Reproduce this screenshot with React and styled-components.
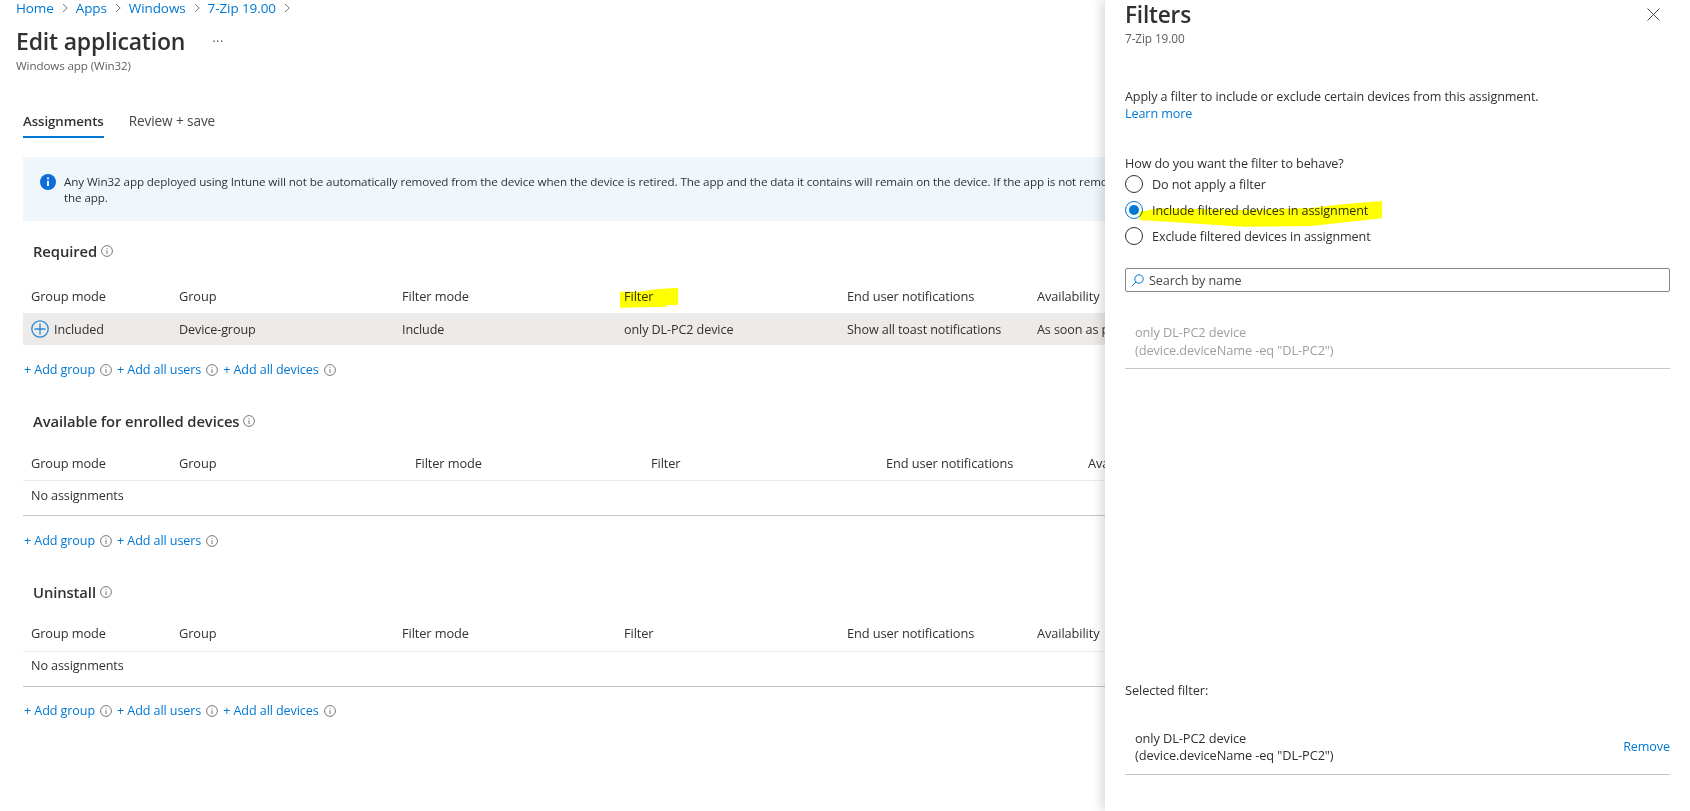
import React from 'react'
import styled, { createGlobalStyle } from 'styled-components'

const GlobalStyle = createGlobalStyle`
html, body {
  margin: 0;
  padding: 0;
  background: #ffffff;
}
body {
  font-family: "Open Sans", "Liberation Sans", sans-serif;
  font-size: 12.6px;
  color: #323130;
  letter-spacing: -0.1px;
}
`

const Page = styled.div`
position: relative;
width: 1690px;
height: 811px;
overflow: hidden;
`

const Main = styled.div`
width: 1667px;
padding-left: 23px;
`

const Breadcrumb = styled.nav`
display: flex;
align-items: center;
height: 16px;
margin-left: -7px;
gap: 6px;
`

const Crumb = styled.a`
color: #0078d4;
font-size: 13.5px;
line-height: 16px;
`

const Chevron = styled.svg`
width: 10px;
height: 10px;
fill: none;
stroke: #7a7876;
stroke-width: 1;
`

const TitleRow = styled.div`
display: flex;
align-items: center;
margin: 9px 0 1px -7px;
height: 32px;
`

const Title = styled.h1`
margin: 0;
font-size: 23px;
font-weight: 600;
line-height: 32px;
letter-spacing: -0.2px;
color: #323130;
`

const More = styled.span`
margin: 0 0 0 27px;
font-size: 13px;
letter-spacing: 0.5px;
color: #605e5c;
`

const Subtitle = styled.div`
margin-left: -7px;
font-size: 11.6px;
line-height: 16px;
color: #605e5c;
`

const Tabs = styled.div`
display: flex;
gap: 25px;
margin-top: 31px;
height: 33px;
`

const Tab = styled.div`
font-size: ${p => (p.$active ? '13.3px' : '13.6px')};
line-height: 16px;
padding-top: 8px;
height: 23px;
font-weight: ${p => (p.$active ? 600 : 400)};
border-bottom: ${p => (p.$active ? '2px solid #0078d4' : 'none')};
color: ${p => (p.$active ? '#323130' : '#484644')};
`

const Banner = styled.div`
display: flex;
gap: 8px;
margin-top: 19px;
height: 47px;
padding: 17px 0 0 17px;
background: #eff6fc;
`

const BannerText = styled.div`
width: 1041px;
overflow: hidden;
font-size: 11.65px;
line-height: 15.5px;
white-space: nowrap;
color: #323130;
`

const Section = styled.section`
margin-top: ${p => p.$top}px;
`

const Heading = styled.h2`
display: flex;
align-items: center;
gap: 4px;
margin: 0 0 ${p => p.$gap}px 10px;
font-size: 14.8px;
line-height: 20px;
font-weight: 600;
color: #323130;
`

const HeaderRow = styled.div`
display: grid;
grid-template-columns: ${p => p.$cols};
align-items: center;
height: 35px;
padding-left: 8px;
font-size: 12.8px;
font-weight: 500;
border-bottom: ${p => (p.$line ? '1px solid #edebe9' : 'none')};
`

const DataRow = styled.div`
display: grid;
grid-template-columns: ${p => p.$cols};
align-items: center;
height: 32px;
padding-left: 8px;
font-size: 12.6px;
background: #edebe9;
color: #323130;
`

const EmptyRow = styled.div`
display: flex;
align-items: center;
height: 35px;
padding: 0 0 6px 8px;
font-size: 12.6px;
box-sizing: border-box;
border-bottom: 1px solid #c8c6c4;
`

const Cell = styled.div`
position: relative;
white-space: nowrap;
`

const ClipCell = styled(Cell)`
overflow: hidden;
`

const ModeCell = styled(Cell)`
display: flex;
align-items: center;
gap: 5px;
`

const Highlight = styled.svg`
position: absolute;
left: ${p => p.$left}px;
top: ${p => p.$top}px;
mix-blend-mode: multiply;
pointer-events: none;
`

const Links = styled.div`
display: flex;
align-items: center;
gap: 5px;
margin-top: ${p => p.$top}px;
height: 16px;
padding-left: 1px;
`

const LinkItem = styled.span`
display: inline-flex;
align-items: center;
gap: 5px;
`

const Link = styled.a`
font-size: 12.6px;
line-height: 16px;
color: #0078d4;
`

const InfoSvg = styled.svg`
flex: none;
width: 12px;
height: 12px;
fill: none;
stroke: #797775;
stroke-width: 1;
`

const Panel = styled.aside`
position: absolute;
top: 0;
right: 0;
bottom: 0;
display: flex;
flex-direction: column;
box-sizing: border-box;
width: 585px;
padding: 0 20px 36px;
background: #ffffff;
box-shadow: -4px 0 10px rgba(0, 0, 0, 0.14);
`

const PanelHead = styled.div`
display: flex;
justify-content: space-between;
height: 30px;
`

const PanelTitle = styled.h2`
margin: 0;
font-size: 22.6px;
line-height: 30px;
font-weight: 600;
letter-spacing: -0.2px;
color: #323130;
`

const CloseIcon = styled.svg`
width: 13px;
height: 13px;
margin: 8px 10px 0 0;
stroke: #484644;
stroke-width: 1;
fill: none;
`

const PanelSub = styled.div`
font-size: 11.8px;
line-height: 16px;
color: #605e5c;
`

const PanelText = styled.div`
margin-top: ${p => p.$top}px;
font-size: 12.6px;
line-height: 17.5px;
color: #323130;
`

const PanelLink = styled.a`
display: block;
font-size: 12.6px;
line-height: 17.5px;
color: #0078d4;
`

const RadioGroup = styled.div`
display: flex;
flex-direction: column;
gap: 4px;
margin-top: 1px;
`

const RadioRow = styled.label`
position: relative;
display: flex;
align-items: center;
gap: 9px;
height: 22px;
font-size: 12.6px;
`

const RadioDot = styled.span`
display: flex;
align-items: center;
justify-content: center;
box-sizing: border-box;
width: 18px;
height: 18px;
border-radius: 50%;
border: 1px solid ${p => (p.$checked ? '#0078d4' : '#323130')};
&::after {
  content: '';
  display: ${p => (p.$checked ? 'block' : 'none')};
  width: 10px;
  height: 10px;
  border-radius: 50%;
  background: #0078d4;
}
`

const SearchBox = styled.div`
display: flex;
align-items: center;
gap: 5px;
box-sizing: border-box;
height: 24px;
margin-top: 21px;
padding-left: 5px;
border: 1px solid #8a8886;
border-radius: 2px;
font-size: 12.6px;
color: #484644;
`

const SearchIcon = styled.svg`
width: 13px;
height: 13px;
fill: none;
stroke: #0078d4;
stroke-width: 1;
`

const FilterItem = styled.div`
display: flex;
align-items: center;
justify-content: space-between;
padding: ${p => p.$pad};
border-bottom: 1px solid #c8c6c4;
font-size: 12.8px;
line-height: 17.6px;
color: ${p => (p.$muted ? '#a19f9d' : '#323130')};
`

const Bottom = styled.div`
margin-top: auto;
`

const SelectedLabel = styled.div`
font-size: 12.8px;
font-weight: 500;
line-height: 17.5px;
margin-bottom: 30px;
`

const Info = () => (
  <InfoSvg viewBox="0 0 12 12">
    <circle cx="6" cy="6" r="5.4" />
    <path d="M6 5.2V9M6 3.2v1" />
  </InfoSvg>
)

const BreadSep = () => (
  <Chevron viewBox="0 0 10 10">
    <path d="M3 1l4.2 4L3 9" />
  </Chevron>
)

// last column stops where the panel starts
const narrow = '148px 223px 222px 223px 190px 68px'
const wide = '148px 236px 236px 235px 202px 17px'
const heads = ['Group mode', 'Group', 'Filter mode', 'Filter', 'End user notifications']

const LinkRow = ({ top, devices }) => (
  <Links $top={top}>
    <LinkItem><Link>+ Add group</Link><Info /></LinkItem>
    <LinkItem><Link>+ Add all users</Link><Info /></LinkItem>
    {devices && <LinkItem><Link>+ Add all devices</Link><Info /></LinkItem>}
  </Links>
)

const Empty = ({ title, cols, devices, top, gap }) => (
  <Section $top={top}>
    <Heading $gap={gap}>{title}<Info /></Heading>
    <HeaderRow $cols={cols} $line>
      {heads.map(h => <Cell key={h}>{h}</Cell>)}
      <ClipCell>Availability</ClipCell>
    </HeaderRow>
    <EmptyRow>No assignments</EmptyRow>
    <LinkRow top={16.4} devices={devices} />
  </Section>
)

const App = () => {
  return (
    <Page>
      <GlobalStyle />
      <Main>
        <Breadcrumb>
          <Crumb>Home</Crumb><BreadSep />
          <Crumb>Apps</Crumb><BreadSep />
          <Crumb>Windows</Crumb><BreadSep />
          <Crumb>7-Zip 19.00</Crumb><BreadSep />
        </Breadcrumb>
        <TitleRow>
          <Title>Edit application</Title>
          <More>···</More>
        </TitleRow>
        <Subtitle>Windows app (Win32)</Subtitle>
        <Tabs>
          <Tab $active>Assignments</Tab>
          <Tab>Review + save</Tab>
        </Tabs>
        <Banner>
          <svg width="16" height="16" viewBox="0 0 16 16" style={{ flex: 'none' }}>
            <circle cx="8" cy="8" r="8" fill="#0f6cdb" />
            <path d="M8 6.8v5.2M8 3.6v1.7" stroke="#fff" strokeWidth="1.9" />
          </svg>
          <BannerText>
            Any Win32 app deployed using Intune will not be automatically removed from the device when the device is retired. The app and the data it contains will remain on the device. If the app is not removed prior to retiring the device
            <br />
            the app.
          </BannerText>
        </Banner>

        <Section $top={19.7}>
          <Heading $gap={17.5}>Required<Info /></Heading>
          <HeaderRow $cols={narrow}>
            <Cell>Group mode</Cell>
            <Cell>Group</Cell>
            <Cell>Filter mode</Cell>
            <Cell>
              <Highlight $left={-4} $top={0} width="60" height="24" viewBox="0 0 60 24">
                <path d="M0 4.7L19.5 4.7L35.6 2.3L58 .7V18H47V19.7L0 20.7Z" fill="#ffff00" />
              </Highlight>
              Filter
            </Cell>
            <Cell>End user notifications</Cell>
            <ClipCell>Availability</ClipCell>
          </HeaderRow>
          <DataRow $cols={narrow}>
            <ModeCell>
              <svg width="18" height="18" viewBox="0 0 18 18" fill="none" stroke="#2b88d8" strokeWidth="1.3">
                <circle cx="9" cy="9" r="8.2" />
                <path d="M9 3.5v11M3.5 9h11" />
              </svg>
              Included
            </ModeCell>
            <Cell>Device-group</Cell>
            <Cell>Include</Cell>
            <Cell>only DL-PC2 device</Cell>
            <Cell>Show all toast notifications</Cell>
            <ClipCell>As soon as possible</ClipCell>
          </DataRow>
          <LinkRow top={17} devices />
        </Section>

        <Empty title="Available for enrolled devices" cols={wide} top={32.4} gap={14.6} />
        <Empty title="Uninstall" cols={narrow} devices top={33.4} gap={13.6} />
      </Main>

      <Panel>
        <PanelHead>
          <PanelTitle>Filters</PanelTitle>
          <CloseIcon viewBox="0 0 13 13">
            <path d="M.5.5l12 12M12.5.5l-12 12" />
          </CloseIcon>
        </PanelHead>
        <PanelSub>7-Zip 19.00</PanelSub>
        <PanelText $top={41.8}>Apply a filter to include or exclude certain devices from this assignment.</PanelText>
        <PanelLink>Learn more</PanelLink>
        <PanelText $top={32}>How do you want the filter to behave?</PanelText>
        <RadioGroup>
          <RadioRow><RadioDot />Do not apply a filter</RadioRow>
          <RadioRow>
            <RadioDot $checked />
            Include filtered devices in assignment
            <Highlight $left={14} $top={1} width="245" height="28" viewBox="0 0 245 28">
              <path d="M.5 11.7L21 8.3L104 10L172 8L206 4L243 1V18.3L172 26L104 26.7L29 21.7L.5 20Z" fill="#ffff00" />
            </Highlight>
          </RadioRow>
          <RadioRow><RadioDot />Exclude filtered devices in assignment</RadioRow>
        </RadioGroup>
        <SearchBox>
          <SearchIcon viewBox="0 0 13 13">
            <circle cx="8" cy="5" r="4.2" />
            <path d="M5 8L.8 12.2" />
          </SearchIcon>
          Search by name
        </SearchBox>
        <FilterItem $muted $pad="32px 0 9px 10px">
          <div>
            only DL-PC2 device
            <br />
            (device.deviceName -eq "DL-PC2")
          </div>
        </FilterItem>
        <Bottom>
          <SelectedLabel>Selected filter:</SelectedLabel>
          <FilterItem $pad="0 0 9px 10px">
            <div>
              only DL-PC2 device
              <br />
              (device.deviceName -eq "DL-PC2")
            </div>
            <Link>Remove</Link>
          </FilterItem>
        </Bottom>
      </Panel>
    </Page>
  )
}

export default App
